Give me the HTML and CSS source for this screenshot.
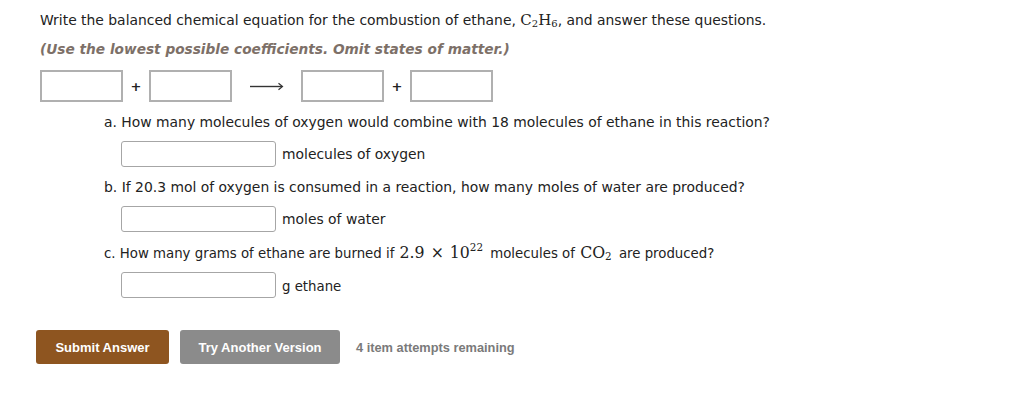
FILE: index.html
```html
<!DOCTYPE html>
<html>
<head>
<meta charset="utf-8">
<link rel="stylesheet" href="styles.css">
</head>
<body>
<div class="page">
  <p class="intro">Write the balanced chemical equation for the combustion of ethane, <span class="m">C<sub>2</sub>H<sub>6</sub></span>, and answer these questions.</p>
  <p class="note">(Use the lowest possible coefficients. Omit states of matter.)</p>
  <div class="eq">
    <span class="ebox"></span>
    <span class="plus">+</span>
    <span class="ebox"></span>
    <svg class="arrow" width="34" height="10" viewBox="0 0 34 10"><path d="M0 5.5H32" stroke="#333" stroke-width="1.4" fill="none"/><path d="M28.5 2.2L32.5 5.5L28.5 8.8" stroke="#333" stroke-width="1.2" fill="none"/></svg>
    <span class="ebox"></span>
    <span class="plus">+</span>
    <span class="ebox"></span>
  </div>
  <div class="q">
    <p class="qt">a. How many molecules of oxygen would combine with 18 molecules of ethane in this reaction?</p>
    <div class="ans"><span class="abox"></span><span class="unit">molecules of oxygen</span></div>
    <p class="qt">b. If 20.3 mol of oxygen is consumed in a reaction, how many moles of water are produced?</p>
    <div class="ans"><span class="abox"></span><span class="unit">moles of water</span></div>
    <p class="qt cond">c. How many grams of ethane are burned if <span class="m">2.9<span class="times">×</span>10<sup>22</sup></span> molecules of <span class="m">CO<sub>2</sub></span> are produced?</p>
    <div class="ans"><span class="abox"></span><span class="unit cond">g ethane</span></div>
  </div>
  <div class="actions">
    <button class="btn submit">Submit Answer</button>
    <button class="btn other">Try Another Version</button>
    <span class="remain">4 item attempts remaining</span>
  </div>
</div>
</body>
</html>
```
FILE: styles.css
```css
html, body { margin: 0; padding: 0; background: #fff; }
.page {
  padding: 11px 0 0 40px;
  font-family: "DejaVu Sans", Verdana, sans-serif;
  font-size: 13.9px;
  color: #222;
}
p { margin: 0; }
.intro { line-height: 18px; }
.m { font-family: "DejaVu Serif", "Liberation Serif", serif; font-size: 15px; }
.m sub, .m sup { font-size: 10px; line-height: 0; }
.m sub { vertical-align: -2px; }
.m sup { vertical-align: 6px; }
.note {
  margin-top: 11px;
  line-height: 18px;
  font-weight: bold;
  font-style: italic;
  font-size: 13.7px;
  color: #7d7068;
}
.eq {
  display: flex;
  align-items: center;
  margin-top: 12px;
  height: 32px;
}
.ebox {
  width: 79px;
  height: 28px;
  border: 2px solid #b0b0b0;
  box-sizing: content-box;
}
.plus { font-weight: bold; width: 26px; text-align: center; font-size: 13px; }
.arrow { margin: 0 17px 0 18px; }
.q { padding-left: 64px; margin-top: 11px; }
.qt { line-height: 18px; }
.cond { font-family: "DejaVu Sans Condensed", "DejaVu Sans", sans-serif; font-stretch: condensed; font-size: 14.8px; }
.cond .m { font-size: 17.5px; margin: 0 3px 0 1px; }
.cond .m sub, .cond .m sup { font-size: 11.5px; }
.cond .m sup { vertical-align: 7px; }
.times { margin: 0 6px; }
.ans { display: flex; align-items: center; margin: 10px 0 11px 17px; }
.abox {
  width: 153px;
  height: 24px;
  border: 1px solid #a6a6a6;
  border-radius: 3px;
}
.unit { margin-left: 6px; }
.actions {
  display: flex;
  align-items: center;
  margin-top: 32px;
  margin-left: -4px;
}
.btn {
  font-family: "Liberation Sans", Arial, sans-serif;
  font-weight: bold;
  font-size: 13px;
  color: #fff;
  border: none;
  border-radius: 3px;
  height: 34px;
  padding: 0;
}
.submit { background: #8e5520; width: 133px; }
.other { background: #8b8b8b; width: 160px; margin-left: 11px; }
.remain {
  font-family: "Liberation Sans", Arial, sans-serif;
  font-weight: bold;
  font-size: 12.8px;
  color: #7a7a7a;
  margin-left: 16px;
}
```
